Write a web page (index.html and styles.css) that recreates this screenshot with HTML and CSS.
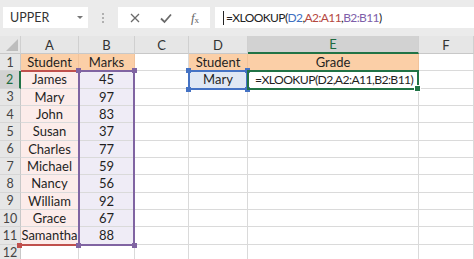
FILE: index.html
```html
<!DOCTYPE html>
<html>
<head>
<meta charset="utf-8">
<link rel="stylesheet" href="styles.css">
</head>
<body>
<div class="toolbar">
  <div class="namebox"><span class="nb-text">UPPER</span><span class="nb-arrow"></span></div>
  <div class="grip"><span></span><span></span><span></span></div>
  <div class="fbtns">
    <svg class="ico" width="12" height="12" viewBox="0 0 12 12"><path d="M2 2 L10 10 M10 2 L2 10" stroke="#6a6a6a" stroke-width="1.3" fill="none"/></svg>
    <svg class="ico" width="14" height="12" viewBox="0 0 14 12"><path d="M2 6.5 L5.5 10 L12 2.5" stroke="#6a6a6a" stroke-width="1.8" fill="none"/></svg>
    <span class="fx"><i>f</i><sub>x</sub></span>
  </div>
  <div class="formula"><span class="caret"></span>=XLOOKUP(<span class="rb">D2</span>,<span class="rr">A2:A11</span>,<span class="rp">B2:B11</span>)</div>
</div>
<div class="sheet">
  <div class="corner"><svg width="12" height="12" viewBox="0 0 12 12"><path d="M12 0 L12 12 L0 12 Z" fill="#bdbdbd"/></svg></div>
  <div class="ch">A</div><div class="ch">B</div><div class="ch">C</div><div class="ch">D</div><div class="ch sel">E</div><div class="ch">F</div>

  <div class="rh">1</div><div class="c or">Student</div><div class="c or">Marks</div><div class="c"></div><div class="c or">Student</div><div class="c or">Grade</div><div class="c"></div>
  <div class="rh sel">2</div><div class="c ra">James</div><div class="c rbk">45</div><div class="c"></div><div class="c rd">Mary</div><div class="c left">=XLOOKUP(D2,A2:A11,B2:B11)</div><div class="c"></div>
  <div class="rh">3</div><div class="c ra">Mary</div><div class="c rbk">97</div><div class="c"></div><div class="c"></div><div class="c"></div><div class="c"></div>
  <div class="rh">4</div><div class="c ra">John</div><div class="c rbk">83</div><div class="c"></div><div class="c"></div><div class="c"></div><div class="c"></div>
  <div class="rh">5</div><div class="c ra">Susan</div><div class="c rbk">37</div><div class="c"></div><div class="c"></div><div class="c"></div><div class="c"></div>
  <div class="rh">6</div><div class="c ra">Charles</div><div class="c rbk">77</div><div class="c"></div><div class="c"></div><div class="c"></div><div class="c"></div>
  <div class="rh">7</div><div class="c ra">Michael</div><div class="c rbk">59</div><div class="c"></div><div class="c"></div><div class="c"></div><div class="c"></div>
  <div class="rh">8</div><div class="c ra">Nancy</div><div class="c rbk">56</div><div class="c"></div><div class="c"></div><div class="c"></div><div class="c"></div>
  <div class="rh">9</div><div class="c ra">William</div><div class="c rbk">92</div><div class="c"></div><div class="c"></div><div class="c"></div><div class="c"></div>
  <div class="rh">10</div><div class="c ra">Grace</div><div class="c rbk">67</div><div class="c"></div><div class="c"></div><div class="c"></div><div class="c"></div>
  <div class="rh">11</div><div class="c ra">Samantha</div><div class="c rbk">88</div><div class="c"></div><div class="c"></div><div class="c"></div><div class="c"></div>
  <div class="rh">12</div><div class="c"></div><div class="c"></div><div class="c"></div><div class="c"></div><div class="c"></div><div class="c"></div>

  <div class="range range-a"><i class="h bl"></i></div>
  <div class="range range-b"><i class="h tl"></i><i class="h tr"></i><i class="h bl"></i><i class="h br"></i></div>
  <div class="range range-d"><i class="h tl"></i><i class="h tr"></i><i class="h bl"></i><i class="h br"></i></div>
  <div class="range active"><i class="fill-handle"></i></div>
</div>
</body>
</html>
```
FILE: styles.css
```css
html, body {
  margin: 0;
  padding: 0;
  width: 474px;
  height: 259px;
  overflow: hidden;
  background: #ffffff;
  font-family: Lato, "Open Sans", sans-serif;
  color: #222;
}
.toolbar {
  height: 36px;
  box-sizing: border-box;
  padding-top: 7px;
  background: #ebebeb;
  display: flex;
  align-items: flex-start;
}
.namebox {
  margin-left: 3px;
  width: 85px;
  height: 21px;
  background: #fff;
  display: flex;
  align-items: center;
  justify-content: space-between;
  box-sizing: border-box;
  padding: 0 5px 0 7px;
}
.nb-text {
  font-size: 12.5px;
  color: #333;
}
.nb-arrow {
  width: 0;
  height: 0;
  border-left: 3px solid transparent;
  border-right: 3px solid transparent;
  border-top: 3px solid #777;
}
.grip {
  width: 30px;
  height: 21px;
  display: flex;
  flex-direction: column;
  align-items: center;
  justify-content: center;
  gap: 2px;
}
.grip span {
  width: 2px;
  height: 2px;
  background: #b0b0b0;
}
.fbtns {
  width: 92px;
  height: 21px;
  background: #fff;
  display: flex;
  align-items: center;
  justify-content: space-around;
  padding: 0 2px;
  box-sizing: border-box;
}
.fx {
  font-family: "Liberation Serif", serif;
  font-size: 13px;
  color: #666;
}
.fx sub {
  font-size: 9px;
  vertical-align: -1px;
}
.formula {
  margin-left: 5px;
  flex: 1;
  height: 21px;
  background: #fff;
  display: flex;
  align-items: center;
  font-size: 12px;
  letter-spacing: -0.6px;
  color: #222;
  padding-left: 8px;
  white-space: nowrap;
}
.caret {
  width: 1px;
  height: 14px;
  background: #222;
  margin-right: 2px;
}
.rb { color: #3e6fc1; }
.rr { color: #b5483f; }
.rp { color: #7e5ea9; }

.sheet {
  display: grid;
  grid-template-columns: 21px 58px 56px 54px 59px 171px 55px;
  grid-template-rows: 18px repeat(12, 17.33px);
  position: relative;
  font-size: 13px;
}
.corner {
  background: #e6e6e6;
  border-right: 1px solid #d0d0d0;
  border-bottom: 1px solid #c8c8c8;
  display: flex;
  align-items: flex-end;
  justify-content: flex-end;
  padding: 0 2px 2px 0;
  box-sizing: border-box;
}
.ch {
  background: #e6e6e6;
  border-right: 1px solid #d0d0d0;
  border-bottom: 1px solid #c8c8c8;
  box-sizing: border-box;
  display: flex;
  align-items: center;
  justify-content: center;
  font-size: 13px;
  color: #333;
}
.ch.sel {
  background: #d2d2d2;
  border-bottom: 2px solid #217346;
  color: #1e6b40;
}
.rh {
  background: #e6e6e6;
  border-right: 1px solid #c8c8c8;
  border-bottom: 1px solid #d6d6d6;
  box-sizing: border-box;
  display: flex;
  align-items: center;
  justify-content: center;
  font-size: 12.5px;
  color: #444;
}
.rh.sel {
  background: #d2d2d2;
  border-right: 2px solid #217346;
  color: #1e6b40;
}
.c {
  border-right: 1px solid #dadada;
  border-bottom: 1px solid #dadada;
  box-sizing: border-box;
  display: flex;
  align-items: center;
  justify-content: center;
  white-space: nowrap;
  color: #1f1f1f;
}
.c.left {
  justify-content: flex-start;
  padding-left: 7px;
  font-size: 12.2px;
  letter-spacing: -0.6px;
}
.c.or { background: #fbcfa7; border-color: #f1c39b; }
.c.ra { background: #fcecea; }
.c.rbk { background: #efecf6; }
.c.rd { background: #dfe7f4; }

.range {
  position: absolute;
  top: -1px;
  bottom: -1px;
  left: -1px;
  right: 0;
  box-sizing: border-box;
  pointer-events: none;
}
.range-a {
  grid-column: 2 / 3;
  grid-row: 3 / 13;
  left: 0;
  right: 1px;
  border-top: 2px solid #c0504d;
  border-bottom: 2px solid #c0504d;
}
.range-b {
  grid-column: 3 / 4;
  grid-row: 3 / 13;
  border: 2px solid #8064a2;
}
.range-d {
  grid-column: 5 / 6;
  grid-row: 3 / 4;
  border: 2px solid #4472c4;
}
.active {
  grid-column: 6 / 7;
  grid-row: 3 / 4;
  border: 2px solid #217346;
}
.h {
  position: absolute;
  width: 5px;
  height: 5px;
}
.range-a .h { background: #c0504d; }
.range-b .h { background: #8064a2; }
.range-d .h { background: #4472c4; }
.tl { left: -4px; top: -4px; }
.tr { right: -4px; top: -4px; }
.bl { left: -4px; bottom: -4px; }
.br { right: -4px; bottom: -4px; }
.fill-handle {
  position: absolute;
  right: -4px;
  bottom: -4px;
  width: 5px;
  height: 5px;
  background: #217346;
  border: 1px solid #fff;
}
```
